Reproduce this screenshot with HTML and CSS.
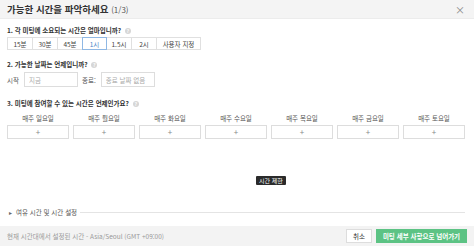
FILE: index.html
```html
<!DOCTYPE html>
<html lang="ko">
<head>
  <meta charset="UTF-8" />
  <title>가능한 시간을 파악하세요</title>
  <link rel="stylesheet" href="styles.css">
</head>
<body>
  <div class="modal">
    <div class="modal-head">
      <span class="title">가능한 시간을 파악하세요 <small>(1/3)</small></span>
      <span class="close">&times;</span>
    </div>

    <div class="modal-body">
      <p class="question">1. 각 미팅에 소요되는 시간은 얼마입니까? <i class="help">?</i></p>
      <div class="durations">
        <button>15분</button>
        <button>30분</button>
        <button>45분</button>
        <button class="active">1시</button>
        <button>1.5시</button>
        <button>2시</button>
        <button class="wide">사용자 지정</button>
      </div>

      <p class="question">2. 가능한 날짜는 언제입니까? <i class="help">?</i></p>
      <div class="dates">
        <label>시작</label>
        <input type="text" placeholder="지금" />
        <label>종료:</label>
        <input type="text" placeholder="종료 날짜 없음" />
      </div>

      <p class="question">3. 미팅에 참여할 수 있는 시간은 언제인가요? <i class="help">?</i></p>
      <div class="days">
        <div class="day"><span>매주 일요일</span><button>+</button></div>
        <div class="day"><span>매주 월요일</span><button>+</button></div>
        <div class="day"><span>매주 화요일</span><button>+</button></div>
        <div class="day"><span>매주 수요일</span><button>+</button></div>
        <div class="day"><span>매주 목요일</span><button>+</button></div>
        <div class="day"><span>매주 금요일</span><button>+</button></div>
        <div class="day"><span>매주 토요일</span><button>+</button></div>
      </div>

      <div class="spacer">
        <span class="tooltip">시간 제한</span>
      </div>

      <div class="extra">
        <span class="arrow">&#9656;</span>
        <span>여유 시간 및 시간 설정</span>
        <span class="line"></span>
      </div>
    </div>

    <div class="modal-foot">
      <span class="tz">현재 시간대에서 설정된 시간 - Asia/Seoul (GMT +09:00)</span>
      <button class="cancel">취소</button>
      <button class="next">미팅 세부 사항으로 넘어가기</button>
    </div>
  </div>
</body>
</html>
```

FILE: styles.css
```css
body {
  margin: 0;
  font-family: "Noto Sans CJK KR", "Noto Sans", sans-serif;
  color: #333;
  background: #fff;
}
.modal {
  width: 474px;
  height: 246px;
  display: flex;
  flex-direction: column;
}
.modal-head {
  height: 19px;
  flex-shrink: 0;
  background: #f4f4f4;
  border-bottom: 1px solid #ececec;
  box-sizing: border-box;
  padding: 0 7px 0 7px;
  display: flex;
  align-items: center;
  justify-content: space-between;
}
.title {
  font-size: 9.5px;
  font-weight: 700;
  color: #333;
}
.title small {
  font-size: 8px;
  font-weight: 400;
  color: #555;
}
.close {
  font-size: 10px;
  color: #888;
  margin-right: 2px;
}
.modal-body {
  flex: 1;
  display: flex;
  flex-direction: column;
  padding: 0 7px;
}
.question {
  margin: 6px 0 2px;
  font-size: 6.5px;
  line-height: 10px;
  font-weight: 700;
  color: #333;
}
.help {
  display: inline-block;
  width: 6px;
  height: 6px;
  border-radius: 50%;
  background: #d6d6d6;
  color: #fff;
  font-size: 5px;
  line-height: 6px;
  text-align: center;
  font-style: normal;
  vertical-align: middle;
  margin-left: 2px;
}
.durations {
  display: flex;
  margin-bottom: 3px;
}
.durations button {
  width: 26px;
  height: 13px;
  padding: 0;
  margin-left: -1px;
  border: 1px solid #e0e0e0;
  background: #fff;
  font-family: inherit;
  font-size: 6.5px;
  color: #444;
}
.durations button:first-child {
  margin-left: 0;
}
.durations button.active {
  border-color: #8fb8e4;
  color: #4a85c8;
  position: relative;
  z-index: 1;
  width: 25px;
}
.durations button.wide {
  width: 45px;
}
.dates {
  display: flex;
  align-items: center;
  font-size: 6.5px;
  color: #555;
  margin: 1px 0 5px;
}
.dates label {
  margin-right: 5px;
}
.dates input {
  width: 54px;
  height: 15px;
  box-sizing: border-box;
  border: 1px solid #ddd;
  padding: 0 4px;
  font-family: inherit;
  font-size: 6.5px;
  margin-right: 4px;
}
.dates input::placeholder {
  color: #aaa;
}
.days {
  display: grid;
  grid-template-columns: repeat(7, 1fr);
  gap: 4px;
  margin-top: 3px;
  padding-right: 2px;
}
.day {
  display: flex;
  flex-direction: column;
  align-items: center;
  gap: 2px;
}
.day span {
  font-size: 6.5px;
  line-height: 10px;
  color: #555;
}
.day button {
  width: 100%;
  height: 14px;
  padding: 0;
  border: 1px solid #ddd;
  background: #fff;
  color: #888;
  font-size: 8px;
  line-height: 12px;
  font-family: inherit;
}
.spacer {
  flex: 1;
  position: relative;
}
.tooltip {
  position: absolute;
  left: 249px;
  top: 37px;
  background: #2b2b2b;
  color: #fff;
  font-size: 6px;
  line-height: 9px;
  padding: 0 3px;
  border-radius: 1px;
}
.extra {
  display: flex;
  align-items: center;
  font-size: 6.5px;
  color: #555;
  margin-bottom: 9px;
  padding-right: 2px;
}
.arrow {
  font-size: 6px;
  margin: 0 4px 0 2px;
  color: #666;
}
.line {
  flex: 1;
  height: 1px;
  background: #e4e4e4;
  margin-left: 3px;
}
.modal-foot {
  height: 20px;
  flex-shrink: 0;
  background: #f3f3f3;
  display: flex;
  align-items: center;
  padding: 0 7px;
  gap: 4px;
}
.tz {
  flex: 1;
  font-size: 6.5px;
  color: #999;
}
.modal-foot button {
  height: 14px;
  padding: 0;
  font-family: inherit;
  font-size: 6.5px;
  border: 1px solid #ddd;
}
.cancel {
  width: 26px;
  background: #fff;
  color: #333;
}
.next {
  width: 91px;
  background: #5cc384;
  border-color: #5cc384 !important;
  color: #fff;
  font-weight: 700;
}
```
